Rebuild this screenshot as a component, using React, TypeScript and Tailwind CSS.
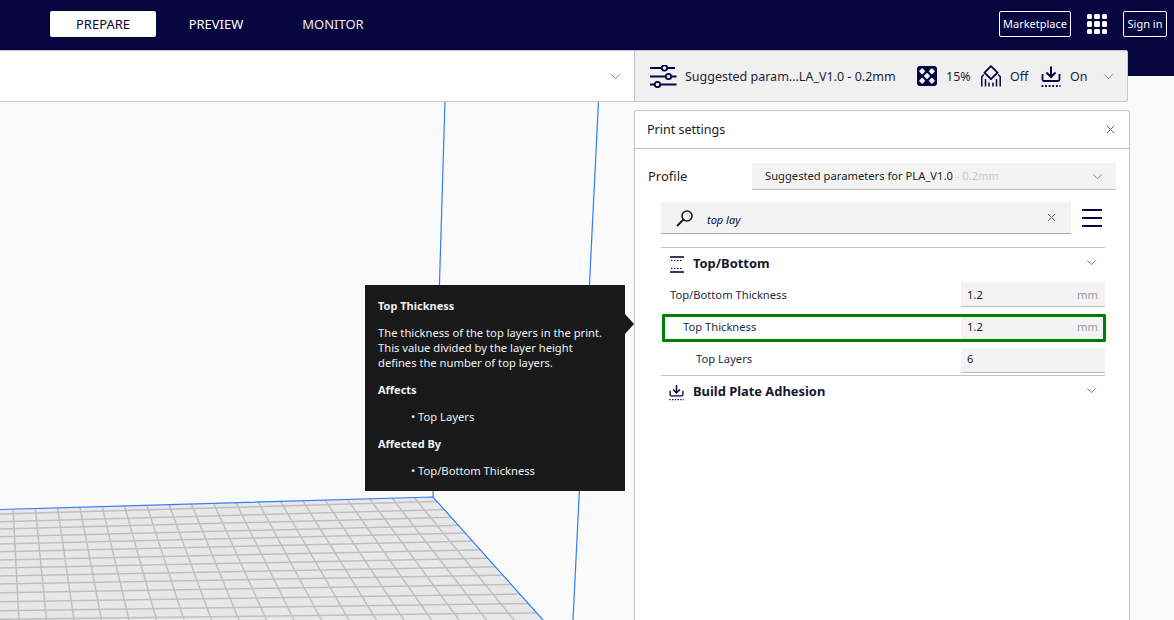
import React from "react";

const NAVY = "#070640";

function Chevron({ className = "" }: { className?: string }) {
  return (
    <svg viewBox="0 0 12 8" className={className} fill="none" stroke="#6f6f6f" strokeWidth="1">
      <path d="M1 1.5 L6 6.5 L11 1.5" />
    </svg>
  );
}

function Cross({ className = "" }: { className?: string }) {
  return (
    <svg viewBox="0 0 10 10" className={className} fill="none" stroke="#666" strokeWidth="1.1">
      <path d="M1 1 L9 9 M9 1 L1 9" />
    </svg>
  );
}

function Sliders() {
  return (
    <svg viewBox="0 0 27 23" className="w-[27px] h-[23px] shrink-0" fill="none" stroke={NAVY} strokeWidth="1.8">
      <path d="M0 3H11M18 3H25M0 11.500H15M22 11.500H26.500M0 19.500H4M11 19.500H26.500" />
      <circle cx="14.500" cy="3" r="2.700" />
      <circle cx="18.500" cy="11.500" r="2.700" />
      <circle cx="7.500" cy="19.500" r="2.700" />
    </svg>
  );
}

function InfillIcon() {
  return (
    <svg viewBox="0 0 20 20" className="w-[20px] h-[20px] shrink-0">
      <rect width="20" height="20" rx="3" fill={NAVY} />
      <g fill="#f0f0f0" stroke="#f0f0f0" strokeWidth="1.600" strokeLinejoin="round">
        <path d="M5.200 3 L7.300 5.200 L5.200 7.400 L3 5.200Z" />
        <path d="M14.800 3 L17 5.200 L14.800 7.400 L12.700 5.200Z" />
        <path d="M5.200 12.600 L7.300 14.800 L5.200 17 L3 14.800Z" />
        <path d="M14.800 12.600 L17 14.800 L14.800 17 L12.700 14.800Z" />
        <path d="M10 7.800 L12.200 10 L10 12.200 L7.800 10Z" />
      </g>
    </svg>
  );
}

function SupportIcon() {
  return (
    <svg viewBox="0 0 20 22" className="w-[20px] h-[22px] shrink-0" fill="none" stroke={NAVY}>
      <path d="M10 1.200 L16.500 7.700 L10 14.200 L3.500 7.700Z" strokeWidth="1.900" strokeLinejoin="round" />
      <path d="M0.800 21.500V11.500L3 9.500M19.200 21.500V11.500L17 9.500" strokeWidth="1.500" />
      <path d="M4.500 21.500V14M8 21.500V17.500M12 21.500V17.500M15.500 21.500V14" strokeWidth="1.500" />
    </svg>
  );
}

function AdhesionIcon({ className = "" }: { className?: string }) {
  return (
    <svg viewBox="0 0 20 21" className={className} fill="none" stroke={NAVY}>
      <path d="M10 0.500V10.500" strokeWidth="2" />
      <path d="M5.500 6.500L10 11L14.500 6.500" strokeWidth="2" />
      <path d="M1.500 8V13.500C1.500 14.500 2 15 3 15H17C18 15 18.500 14.500 18.500 13.500V8" strokeWidth="1.800" />
      <path d="M0.500 20H19.500" strokeWidth="1.800" strokeDasharray="1.800 1.800" />
    </svg>
  );
}

function TopBottomIcon() {
  return (
    <svg viewBox="0 0 14 17" className="w-[14px] h-[17px] shrink-0" fill="none" stroke={NAVY}>
      <path d="M0 1H14" strokeWidth="1.600" />
      <path d="M1 4.500H13M1 12.500H13" strokeWidth="1.200" strokeDasharray="1.500 1.500" />
      <path d="M0 16H14" strokeWidth="1.600" />
    </svg>
  );
}

function GridIcon() {
  const cells = [0, 1, 2, 3, 4, 5, 6, 7, 8];
  return (
    <div className="grid grid-cols-3 gap-[2px] w-[20px] h-[20px]">
      {cells.map((c) => (
        <div key={c} className="bg-white rounded-[1.500px]" />
      ))}
    </div>
  );
}

function Scene() {
  const vertical = Array.from({ length: 19 }, (_, k) => k);
  const horizontal = [514, 521.7, 529, 536.7, 544, 551.7, 560, 568, 576, 584, 592.7, 601.7, 610.7, 619.3];
  return (
    <svg viewBox="0 0 1174 620" className="absolute inset-0 w-full h-full">
      <defs>
        <clipPath id="plate">
          <path d="M0 509.500 L433 497 L543 620 L0 620Z" />
        </clipPath>
      </defs>
      <path d="M0 509.500 L433 497 L543 620 L0 620Z" fill="#e8e8e8" />
      <g clipPath="url(#plate)" stroke="#bfbfbf" strokeWidth="1.500" fill="none">
        {vertical.map((k) => {
          const yTop = 509.5 - (13 + 22.3 * k) * 0.029;
          return <line key={k} x1={13 + 22.3 * k} y1={yTop} x2={19 + 27.5 * k} y2={620} />;
        })}
        {horizontal.map((y) => {
          const slope = -0.029 + ((y - 510) / 110) * 0.017;
          return <line key={y} x1={0} y1={y} x2={560} y2={y + 560 * slope} />;
        })}
      </g>
      <g stroke="#2f7df6" strokeWidth="1.200" fill="none">
        <path d="M0 509.500 L433 497 L543 620" />
        <path d="M433 497 L445 101" />
        <path d="M598.500 101 L573 620" />
      </g>
    </svg>
  );
}

function SettingRow({
  label,
  value,
  unit,
  indent,
  offset,
  highlighted,
}: {
  label: string;
  value: string;
  unit?: string;
  indent: string;
  offset: string;
  highlighted?: boolean;
}) {
  return (
    <div
      className={
        highlighted
          ? "flex items-stretch h-[28px] ml-[4px] mr-[2px] border-[3px] border-[#008000] rounded-[1px]"
          : "flex items-stretch h-[25px] mx-[3px]"
      }
    >
      <div className={`flex-1 flex items-center text-[11.200px] text-[#1f2a44] ${indent} ${offset}`}>{label}</div>
      <div
        className={
          highlighted
            ? `w-[142px] flex items-center justify-between bg-[#f3f3f3] pl-[6px] pr-[5px] text-[11.200px] text-[#222] ${offset}`
            : `w-[144px] flex items-center justify-between bg-[#f3f3f3] border-b border-[#bdbdbd] pl-[6px] pr-[7px] text-[11.200px] text-[#222] ${offset}`
        }
      >
        <span>{value}</span>
        {unit ? <span className="text-[#999]">{unit}</span> : null}
      </div>
    </div>
  );
}

export default function App() {
  return (
    <div className="relative w-[1174px] h-[620px] overflow-hidden bg-[#fafafa] font-['Noto_Sans',sans-serif]">
      <Scene />

      <div className="relative">
        <header className="h-[76px] bg-[#070640] flex items-start pl-[50px] pr-[7px] pt-[11px] text-[13px] text-white">
          <div className="w-[106px] h-[26px] pt-[1px] bg-white rounded-[2px] flex items-center justify-center text-[#070640]">PREPARE</div>
          <div className="w-[106px] h-[26px] pt-[1px] ml-[7px] flex items-center justify-center">PREVIEW</div>
          <div className="w-[106px] h-[26px] pt-[1px] ml-[11px] flex items-center justify-center text-[#f5e9e3]">MONITOR</div>
          <div className="ml-auto flex items-center">
            <div className="w-[72px] h-[26px] border border-white rounded-[2px] flex items-center justify-center text-[11px]">Marketplace</div>
            <div className="ml-[16px] mr-[16px]">
              <GridIcon />
            </div>
            <div className="w-[44px] h-[26px] border border-white rounded-[2px] flex items-center justify-center text-[11px]">Sign in</div>
          </div>
        </header>

        <div className="-mt-[26px] flex items-stretch h-[52px]">
          <div className="w-[634px] bg-white border-y border-[#c5c5c5] flex items-center justify-end pr-[13px]">
            <Chevron className="w-[11px] h-[7px]" />
          </div>
          <div className="w-[494px] bg-[#f0f0f0] border border-[#c5c5c5] rounded-r-[2px] flex items-center pl-[15px] text-[12.500px] text-[#1a1f3c]">
            <Sliders />
            <span className="ml-[8px] w-[232px] mt-[2px]">Suggested param...LA_V1.0 - 0.2mm</span>
            <InfillIcon />
            <span className="ml-[9px] w-[35px] mt-[2px]">15%</span>
            <SupportIcon />
            <span className="ml-[9px] w-[31px] mt-[2px]">Off</span>
            <AdhesionIcon className="w-[20px] h-[21px] shrink-0" />
            <span className="ml-[9px] w-[33px] mt-[2px]">On</span>
            <Chevron className="w-[11px] h-[7px]" />
          </div>
        </div>

        <div className="flex">
          <div className="w-[634px] shrink-0" />
          <aside className="mt-[8px] w-[496px] h-[520px] bg-white border border-[#c5c5c5] rounded-t-[2px]">
            <div className="h-[38px] border-b border-[#c5c5c5] flex items-center justify-between pl-[12px] pr-[14px]">
              <span className="text-[12.500px] text-[#222] mt-[2px]">Print settings</span>
              <Cross className="w-[9px] h-[9px]" />
            </div>

            <div className="mt-[14px] ml-[13px] mr-[13px] flex items-center h-[27px]">
              <span className="w-[104px] text-[13px] text-[#222]">Profile</span>
              <div className="flex-1 h-[27px] bg-[#f3f3f3] border-b border-[#bdbdbd] flex items-center justify-between pl-[13px] pr-[13px] text-[11.200px] text-[#222]">
                <span>
                  Suggested parameters for PLA_V1.0 <span className="text-[#c9c9c9]">- 0.2mm</span>
                </span>
                <Chevron className="w-[11px] h-[7px]" />
              </div>
            </div>

            <div className="mt-[12px] ml-[26px] flex items-center">
              <div className="w-[410px] h-[32px] bg-[#f3f3f3] border-b border-[#a8a8a8] flex items-center pl-[15px] pr-[15px]">
                <svg viewBox="0 0 18 18" className="w-[18px] h-[18px] shrink-0" fill="none" stroke="#1a1a1a">
                  <circle cx="11" cy="7" r="5" strokeWidth="1.600" />
                  <path d="M7.500 10.500L1 17" strokeWidth="2" />
                </svg>
                <span className="ml-[13px] mt-[6px] flex-1 text-[11px] italic text-[#070640]">top lay</span>
                <Cross className="w-[9px] h-[9px]" />
              </div>
              <svg viewBox="0 0 20 18" className="ml-[11px] w-[20px] h-[18px]" fill="none" stroke={NAVY} strokeWidth="2.200">
                <path d="M0 1H20M0 9H20M0 17H20" />
              </svg>
            </div>

            <div className="mt-[13px] ml-[26px] w-[444px] border-t border-[#c5c5c5]">
              <div className="h-[33px] pl-[9px] pr-[8px] flex items-center">
                <TopBottomIcon />
                <span className="ml-[9px] -mt-[2px] flex-1 text-[12.900px] font-bold text-[#14172e]">Top/Bottom</span>
                <Chevron className="w-[11px] h-[7px] -mt-[4px]" />
              </div>
              <div className="-mx-[3px] mt-[1px]">
                <SettingRow label="Top/Bottom Thickness" value="1.2" unit="mm" indent="pl-[9px]" offset="pt-[2px]" />
                <div className="mt-[7px]">
                  <SettingRow label="Top Thickness" value="1.2" unit="mm" indent="pl-[18px]" offset="pb-[2px]" highlighted />
                </div>
                <div className="mt-[6px]">
                  <SettingRow label="Top Layers" value="6" indent="pl-[35px]" offset="pb-[2px]" />
                </div>
              </div>
              <div className="mt-[2px] border-t border-[#c5c5c5] h-[34px] pl-[8px] pr-[8px] flex items-center">
                <AdhesionIcon className="w-[15px] h-[17px] shrink-0" />
                <span className="ml-[9px] -mt-[2px] flex-1 text-[12.900px] font-bold text-[#14172e]">Build Plate Adhesion</span>
                <Chevron className="w-[11px] h-[7px] -mt-[4px]" />
              </div>
            </div>
          </aside>
        </div>
      </div>

      <div className="absolute left-[365px] top-[285px] w-[260px] h-[206px] bg-[#191919] pl-[13px] pt-[13px] text-[11.200px] leading-[15px] text-[#eef1f5]">
        <p className="font-bold text-[11px]">Top Thickness</p>
        <p className="mt-[12px]">
          The thickness of the top layers in the print.
          <br />
          This value divided by the layer height
          <br />
          defines the number of top layers.
        </p>
        <p className="mt-[12px] font-bold text-[11px]">Affects</p>
        <p className="mt-[12px] pl-[33px]">• Top Layers</p>
        <p className="mt-[12px] font-bold text-[11px]">Affected By</p>
        <p className="mt-[12px] pl-[33px]">• Top/Bottom Thickness</p>
        <svg viewBox="0 0 9 20" className="absolute left-[260px] top-[29px] w-[9px] h-[20px]">
          <path d="M0 0L9 10L0 20Z" fill="#191919" />
        </svg>
      </div>
    </div>
  );
}
